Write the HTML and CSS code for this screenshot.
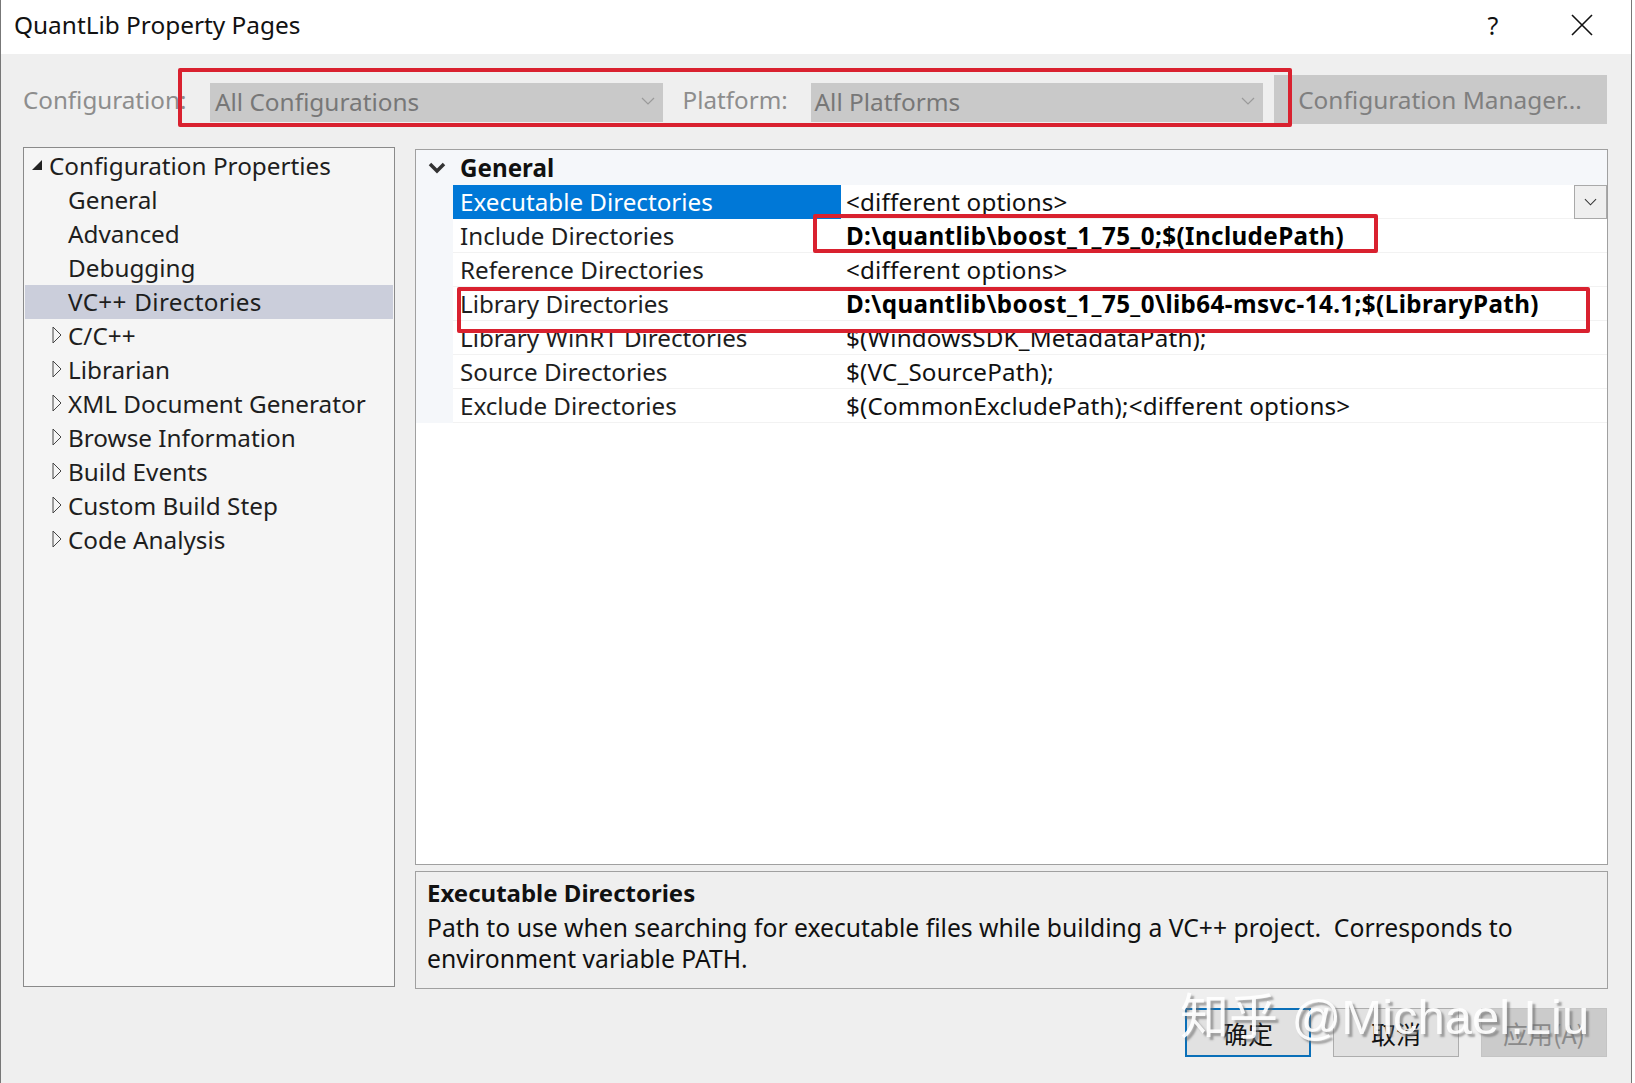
FILE: index.html
```html
<!DOCTYPE html>
<html lang="en">
<head>
<meta charset="utf-8">
<title>QuantLib Property Pages</title>
<link rel="stylesheet" href="styles.css">
</head>
<body>
<div class="dialog">
  <header class="titlebar">
    <span class="title">QuantLib Property Pages</span>
    <span class="help">?</span>
    <svg class="close" viewBox="0 0 22 22"><path d="M1 1L21 21M21 1L1 21" fill="none" stroke="#111" stroke-width="1.6"/></svg>
  </header>
  <div class="body">
    <div class="toolbar">
      <span class="tool-label config-label">Configuration:</span>
      <div class="combo combo-config"><span>All Configurations</span><svg class="combo-chev" viewBox="0 0 14 8"><path d="M1 1L7 7L13 1" fill="none" stroke="#9a9a9a" stroke-width="1.2"/></svg></div>
      <span class="tool-label platform-label">Platform:</span>
      <div class="combo combo-platform"><span>All Platforms</span><svg class="combo-chev" viewBox="0 0 14 8"><path d="M1 1L7 7L13 1" fill="none" stroke="#9a9a9a" stroke-width="1.2"/></svg></div>
      <div class="manager">Configuration Manager...</div>
    </div>
    <div class="main">
      <nav class="tree">
        <div class="node root"><svg class="tri-open" viewBox="0 0 12 12"><path d="M11 1V11H1Z" fill="#222"/></svg>Configuration Properties</div>
        <div class="node leaf">General</div>
        <div class="node leaf">Advanced</div>
        <div class="node leaf">Debugging</div>
        <div class="node leaf selected">VC++ Directories</div>
        <div class="node branch"><svg class="tri" viewBox="0 0 10 18"><path d="M1 1L9 9L1 17Z" fill="none" stroke="#444" stroke-width="1"/></svg>C/C++</div>
        <div class="node branch"><svg class="tri" viewBox="0 0 10 18"><path d="M1 1L9 9L1 17Z" fill="none" stroke="#444" stroke-width="1"/></svg>Librarian</div>
        <div class="node branch"><svg class="tri" viewBox="0 0 10 18"><path d="M1 1L9 9L1 17Z" fill="none" stroke="#444" stroke-width="1"/></svg>XML Document Generator</div>
        <div class="node branch"><svg class="tri" viewBox="0 0 10 18"><path d="M1 1L9 9L1 17Z" fill="none" stroke="#444" stroke-width="1"/></svg>Browse Information</div>
        <div class="node branch"><svg class="tri" viewBox="0 0 10 18"><path d="M1 1L9 9L1 17Z" fill="none" stroke="#444" stroke-width="1"/></svg>Build Events</div>
        <div class="node branch"><svg class="tri" viewBox="0 0 10 18"><path d="M1 1L9 9L1 17Z" fill="none" stroke="#444" stroke-width="1"/></svg>Custom Build Step</div>
        <div class="node branch"><svg class="tri" viewBox="0 0 10 18"><path d="M1 1L9 9L1 17Z" fill="none" stroke="#444" stroke-width="1"/></svg>Code Analysis</div>
      </nav>
      <div class="right">
        <section class="grid">
          <div class="group"><svg class="group-chev" viewBox="0 0 18 12"><path d="M2 2L9 9L16 2" fill="none" stroke="#333" stroke-width="3.5"/></svg><b>General</b></div>
          <div class="row"><div class="name active">Executable Directories</div><div class="value">&lt;different options&gt;</div><div class="drop"><svg viewBox="0 0 14 8"><path d="M1 1L7 7L13 1" fill="none" stroke="#333" stroke-width="1.1"/></svg></div></div>
          <div class="row"><div class="name">Include Directories</div><div class="value strong">D:\quantlib\boost_1_75_0;$(IncludePath)</div></div>
          <div class="row"><div class="name">Reference Directories</div><div class="value">&lt;different options&gt;</div></div>
          <div class="row"><div class="name">Library Directories</div><div class="value strong">D:\quantlib\boost_1_75_0\lib64-msvc-14.1;$(LibraryPath)</div></div>
          <div class="row"><div class="name">Library WinRT Directories</div><div class="value">$(WindowsSDK_MetadataPath);</div></div>
          <div class="row"><div class="name">Source Directories</div><div class="value">$(VC_SourcePath);</div></div>
          <div class="row"><div class="name">Exclude Directories</div><div class="value">$(CommonExcludePath);&lt;different options&gt;</div></div>
        </section>
        <section class="desc">
          <h2>Executable Directories</h2>
          <p>Path to use when searching for executable files while building a VC++ project.&nbsp; Corresponds to<br>environment variable PATH.</p>
        </section>
      </div>
    </div>
    <div class="buttons">
      <div class="btn btn-ok">确定</div>
      <div class="btn">取消</div>
      <div class="btn btn-off">应用(A)</div>
    </div>
  </div>
  <div class="mark mark-top"></div>
  <div class="mark mark-inc"></div>
  <div class="mark mark-lib"></div>
  <div class="watermark">知乎 @Michael.Liu</div>
</div>
</body>
</html>
```
FILE: styles.css
```css
* { box-sizing: border-box; }
html, body { margin: 0; padding: 0; background: #fff; overflow: hidden; }
body { width: 1635px; height: 1083px; font-family: "Noto Sans", "Noto Sans CJK SC", sans-serif; font-size: 24.2px; color: #1e1e1e; }
.dialog { position: relative; width: 1632px; height: 1083px; border-left: 1px solid #777; border-right: 1px solid #777; display: flex; flex-direction: column; }
.titlebar { height: 54px; flex: none; background: #fff; display: flex; align-items: center; padding: 0 0 5px 13px; }
.title { flex: 1; font-size: 24.4px; color: #111; }
.help { width: 28px; text-align: center; font-size: 25px; color: #111; margin-right: 64px; }
.close { width: 22px; height: 22px; margin-right: 38px; }
.body { flex: 1; background: #efefef; padding: 21px 24px 0 22px; display: flex; flex-direction: column; }
.toolbar { height: 49px; flex: none; display: flex; align-items: center; color: #8d8d8d; font-size: 24.2px; }
.tool-label { white-space: nowrap; }
.config-label { width: 187px; }
.combo { height: 39px; background: #c9c9c9; color: #777; display: flex; align-items: center; justify-content: space-between; padding: 0 8px 2px 5px; margin-top: 5px; font-size: 24.4px; }
.combo-config { width: 453px; }
.combo-platform { width: 453px; padding-left: 4px; }
.combo-chev { width: 14px; height: 8px; }
.platform-label { width: 148px; padding-left: 20px; }
.manager { width: 333px; height: 49px; margin-left: 11px; background: #c9c9c9; color: #7f7f7f; display: flex; align-items: center; padding-left: 24px; white-space: nowrap; font-size: 24.4px; }
.main { display: flex; gap: 20px; margin-top: 23px; margin-right: -1px; height: 843px; flex: none; }
.tree { width: 372px; height: 840px; background: #f5f5f5; border: 1px solid #8a8a8a; padding: 1px 1px 0; font-size: 24.3px; }
.node { height: 34px; display: flex; align-items: center; white-space: nowrap; padding-bottom: 2px; }
.root { padding-left: 6px; }
.tri-open { width: 12px; height: 12px; margin-right: 6px; }
.leaf { padding-left: 43px; }
.selected { word-spacing: 1px; letter-spacing: .3px; }
.branch { padding-left: 27px; }
.tri { width: 10px; height: 18px; margin-right: 6px; }
.selected { background: #cbcedb; }
.right { flex: 1; display: flex; flex-direction: column; gap: 6px; padding-top: 2px; }
.grid { height: 716px; flex: none; background: #fff; border: 1px solid #a0a0a0; }
.group { height: 35px; background: #f5f7fa; display: flex; align-items: center; padding-left: 12px; color: #111; }
.group-chev { width: 18px; height: 12px; margin-right: 14px; }
.row { height: 34px; display: flex; align-items: center; background: #f5f7fa; padding-left: 37px; }
.name { width: 388px; height: 34px; background: #fff; border-bottom: 1px solid #f2f2f2; padding-left: 7px; line-height: 34px; white-space: nowrap; }
.active { background: #0078d7; color: #fff; border-bottom: 0; }
.value { flex: 1; height: 34px; background: #fff; border-bottom: 1px solid #f2f2f2; padding-left: 5px; line-height: 34px; white-space: nowrap; color: #111; letter-spacing: .2px; }
.strong { font-weight: 700; color: #000; letter-spacing: .4px; }
.drop { width: 33px; height: 34px; background: #efefef; border: 1px solid #a9a9a9; display: flex; align-items: center; justify-content: center; }
.drop svg { width: 13px; height: 8px; }
.desc { height: 118px; flex: none; border: 1px solid #a0a0a0; background: #efefef; padding: 4px 11px; color: #111; }
.desc h2 { margin: 0 0 3px; font-size: 24px; line-height: 33px; font-weight: 700; }
.desc p { margin: 0; line-height: 31px; font-size: 24.7px; }
.buttons { display: flex; justify-content: flex-end; gap: 22px; margin-top: 18px; }
.btn { width: 126px; height: 49px; background: #e1e1e1; border: 1px solid #adadad; display: flex; align-items: center; justify-content: center; color: #111; font-family: "Noto Sans CJK SC", sans-serif; font-size: 25px; }
.btn-ok { border: 2px solid #0a6fb8; }
.btn-off { background: #cbcbcb; border-color: #c4c4c4; color: #8a8a8a; }
.mark { position: absolute; border: 4px solid #d9212f; border-radius: 2px; }
.mark-top { left: 177px; top: 68px; width: 1114px; height: 59px; }
.mark-inc { left: 812px; top: 214px; width: 565px; height: 39px; }
.mark-lib { left: 456px; top: 287px; width: 1133px; height: 46px; }
.watermark { position: absolute; left: 1179px; top: 987px; font-family: "Liberation Sans", "Noto Sans CJK SC", sans-serif; font-size: 49px; line-height: 60px; white-space: nowrap; color: rgba(255,255,255,.92); text-shadow: 3px 3px 2px rgba(110,110,110,.6); }
```
